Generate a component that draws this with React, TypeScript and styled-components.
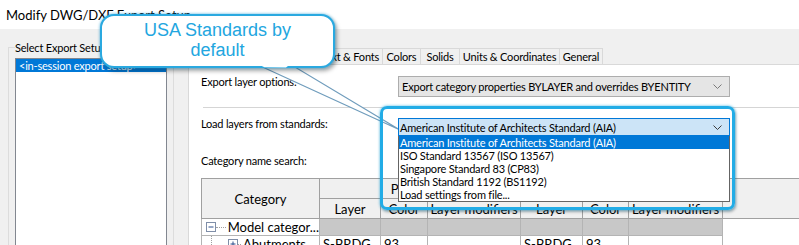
import styled, { createGlobalStyle } from "styled-components";

const GlobalStyle = createGlobalStyle`
  html, body {
    margin: 0;
    padding: 0;
    background: #ffffff;
  }
  * {
    box-sizing: border-box;
  }
`;

const UI_FONT = `"Lato", "Liberation Sans", sans-serif`;

const Window = styled.div`
  position: relative;
  width: 799px;
  height: 245px;
  overflow: hidden;
  background: #f0f0f0;
  font-family: ${UI_FONT};
  font-size: 11px;
  letter-spacing: -0.2px;
  color: #000;
`;

const TitleBar = styled.div`
  height: 29px;
  background: #ffffff;
  padding-left: 6px;
  display: flex;
  align-items: center;
  font-size: 13px;
  letter-spacing: 0;
`;

const Body = styled.div`
  display: flex;
  height: 216px;
`;

const LeftPane = styled.div`
  width: 188px;
  flex-shrink: 0;
  padding: 12px 14px 0 8px;
`;

const GroupBox = styled.fieldset`
  margin: 0;
  padding: 0 6px;
  border: 1px solid #dcdcdc;
  height: 240px;
  min-width: 0;
`;

const Legend = styled.legend`
  padding: 0;
  font-size: 11px;
  line-height: 13px;
`;

const ListBox = styled.div`
  margin-top: 4px;
  height: 200px;
  background: #ffffff;
  border: 1px solid #828790;
`;

const ListItem = styled.div<{ $selected?: boolean }>`
  height: 13px;
  line-height: 13px;
  padding-left: 3px;
  white-space: nowrap;
  overflow: hidden;
  background: ${({ $selected }) => ($selected ? "#0078d7" : "transparent")};
  color: ${({ $selected }) => ($selected ? "#ffffff" : "#000000")};
`;

const RightPane = styled.div`
  flex: 1;
  padding-top: 19px;
  display: flex;
  flex-direction: column;
  min-width: 0;
`;

const TabStrip = styled.div`
  display: flex;
  align-items: flex-end;
  height: 16px;
  white-space: nowrap;
`;

const Tab = styled.div<{ $w: number; $active?: boolean }>`
  width: ${({ $w }) => $w}px;
  height: ${({ $active }) => ($active ? 18 : 16)}px;
  margin-bottom: ${({ $active }) => ($active ? -1 : 0)}px;
  border: 1px solid #d9d9d9;
  border-bottom: none;
  border-left-width: ${({ $active }) => ($active ? 1 : 0)}px;
  background: ${({ $active }) => ($active ? "#ffffff" : "#f0f0f0")};
  display: flex;
  align-items: center;
  justify-content: center;
  font-size: 11px;
  flex-shrink: 0;
  position: relative;
`;

const TabPanel = styled.div`
  flex: 1;
  background: #ffffff;
  border: 1px solid #d9d9d9;
  border-right: none;
  padding-left: 12px;
  display: flex;
  flex-direction: column;
`;

const FormRow = styled.div<{ $h: number }>`
  display: flex;
  height: ${({ $h }) => $h}px;
  flex-shrink: 0;
`;

const FieldLabel = styled.div<{ $top: number }>`
  width: 197px;
  flex-shrink: 0;
  padding-top: ${({ $top }) => $top}px;
  line-height: 16px;
  white-space: nowrap;
`;

const ComboWrap = styled.div<{ $top: number }>`
  position: relative;
  z-index: 2;
  margin-top: ${({ $top }) => $top}px;
  width: 332px;
`;

const Combo = styled.div<{ $h: number; $open?: boolean }>`
  height: ${({ $h }) => $h}px;
  border: 1px solid ${({ $open }) => ($open ? "#0078d7" : "#adadad")};
  background: ${({ $open }) => ($open ? "#cce4f7" : "#e5e5e5")};
  display: flex;
  align-items: center;
  justify-content: space-between;
  padding: 0 7px 0 ${({ $open }) => ($open ? 1 : 3)}px;
  white-space: nowrap;
`;

const DropList = styled.div`
  position: absolute;
  top: 100%;
  left: 0;
  width: 100%;
  background: #ffffff;
  border: 1px solid #646464;
  border-top: none;
  z-index: 3;
`;

const DropItem = styled.div<{ $selected?: boolean }>`
  height: 13px;
  line-height: 13px;
  padding-left: 1px;
  white-space: nowrap;
  background: ${({ $selected }) => ($selected ? "#0078d7" : "#ffffff")};
  color: ${({ $selected }) => ($selected ? "#ffffff" : "#000000")};
`;

const SearchBox = styled.div`
  margin-top: 16px;
  width: 332px;
  height: 20px;
  border: 1px solid #7a7a7a;
`;

const Separator = styled.div`
  margin: 10px 0 0 2px;
  height: 1px;
  background: #d5d5d5;
  flex-shrink: 0;
`;

const Grid = styled.table`
  border-collapse: collapse;
  table-layout: fixed;
  width: 640px;
  font-size: 13px;
  letter-spacing: 0;
  border-top: 1px solid #a0a0a0;
`;

const HeadCell = styled.th<{ $h?: number }>`
  height: ${({ $h }) => $h ?? 20}px;
  padding: 0;
  font-weight: normal;
  background: #f0f0f0;
  border: 1px solid #a0a0a0;
  text-align: center;
  white-space: nowrap;
  overflow: hidden;
`;

const Filler = styled.th`
  background: #f0f0f0;
  border-bottom: 1px solid #a0a0a0;
  padding: 0;
`;

const Cell = styled.td<{ $hatched?: boolean }>`
  height: 17px;
  padding: 0 0 0 3px;
  border: 1px solid #b4b4b4;
  white-space: nowrap;
  overflow: hidden;
  background-color: ${({ $hatched }) => ($hatched ? "#c8c8c8" : "#ffffff")};
  background-image: ${({ $hatched }) =>
    $hatched
      ? "repeating-conic-gradient(#b9b9b9 0% 25%, #d7d7d7 0% 50%)"
      : "none"};
  background-size: 2px 2px;
`;

const BlankCell = styled.td`
  padding: 0;
  background: #ffffff;
`;

const TreeCell = styled.div`
  display: flex;
  align-items: center;
  height: 16px;
`;

const TreeLine = styled.span<{ $w: number }>`
  width: ${({ $w }) => $w}px;
  border-top: 1px dotted #a0a0a0;
  margin: 0 2px 0 0;
`;

const VLine = styled.span`
  width: 0;
  height: 17px;
  border-left: 1px dotted #a0a0a0;
  margin-left: 4px;
  margin-right: 16px;
`;

const Bubble = styled.div`
  position: absolute;
  left: 100px;
  top: 14px;
  width: 235px;
  height: 54px;
  background: #ffffff;
  border: 2px solid #2aa9e0;
  border-radius: 14px;
  box-shadow: 0 0 3px rgba(42, 169, 224, 0.8), 2px 3px 4px rgba(0, 0, 0, 0.35);
  font-family: "Liberation Sans", Arial, sans-serif;
  font-size: 18px;
  line-height: 20px;
  letter-spacing: 0;
  color: #22a6e0;
  text-align: center;
  padding-top: 4px;
  z-index: 6;
`;

const Tail = styled.svg`
  position: absolute;
  left: 250px;
  top: 60px;
  z-index: 1;
  overflow: visible;
`;

const TailCover = styled.svg`
  position: absolute;
  left: 250px;
  top: 60px;
  z-index: 7;
  overflow: visible;
`;

const Highlight = styled.div`
  position: absolute;
  left: 380px;
  top: 106px;
  width: 355px;
  height: 104px;
  border: 3px solid #22ace6;
  border-radius: 7px;
  box-shadow: 0 0 3px rgba(34, 172, 230, 0.8), 1px 2px 3px rgba(0, 0, 0, 0.3);
  z-index: 5;
  pointer-events: none;
`;

function Chevron({ color }: { color: string }) {
  return (
    <svg width="9" height="5" viewBox="0 0 9 5">
      <polyline points="0.5,0.5 4.5,4.5 8.5,0.5" fill="none" stroke={color} strokeWidth="1" />
    </svg>
  );
}

function Expander({ open }: { open: boolean }) {
  return (
    <svg width="10" height="10" viewBox="0 0 10 10" style={{ flexShrink: 0 }}>
      <rect x="0.5" y="0.5" width="9" height="9" fill="#ffffff" stroke="#7f8ea8" />
      <line x1="2.5" y1="5" x2="7.5" y2="5" stroke="#2c4f8c" />
      {!open && <line x1="5" y1="2.5" x2="5" y2="7.5" stroke="#2c4f8c" />}
    </svg>
  );
}

const tabs = [
  { label: "Layers", w: 44, active: true },
  { label: "Lines", w: 36 },
  { label: "Patterns", w: 50 },
  { label: "Text & Fonts", w: 65 },
  { label: "Colors", w: 38 },
  { label: "Solids", w: 39 },
  { label: "Units & Coordinates", w: 100 },
  { label: "General", w: 43 },
];

const standards = [
  "American Institute of Architects Standard (AIA)",
  "ISO Standard 13567 (ISO 13567)",
  "Singapore Standard 83 (CP83)",
  "British Standard 1192 (BS1192)",
  "Load settings from file...",
];

export default function App() {
  return (
    <>
      <GlobalStyle />
      <Window>
        <TitleBar>Modify DWG/DXF Export Setup</TitleBar>
        <Body>
          <LeftPane>
            <GroupBox>
              <Legend>Select Export Setup</Legend>
              <ListBox>
                <ListItem $selected>&lt;in-session export setup&gt;</ListItem>
              </ListBox>
            </GroupBox>
          </LeftPane>
          <RightPane>
            <TabStrip>
              {tabs.map((t) => (
                <Tab key={t.label} $w={t.w} $active={t.active}>
                  {t.label}
                </Tab>
              ))}
            </TabStrip>
            <TabPanel>
              <FormRow $h={32}>
                <FieldLabel $top={9}>Export layer options:</FieldLabel>
                <ComboWrap $top={11}>
                  <Combo $h={21}>
                    <span>Export category properties BYLAYER and overrides BYENTITY</span>
                    <Chevron color="#7a7a7a" />
                  </Combo>
                </ComboWrap>
              </FormRow>
              <Separator />
              <FormRow $h={28}>
                <FieldLabel $top={8}>Load layers from standards:</FieldLabel>
                <ComboWrap $top={10}>
                  <Combo $h={18} $open>
                    <span>{standards[0]}</span>
                    <Chevron color="#3c3c3c" />
                  </Combo>
                  <DropList>
                    {standards.map((s, i) => (
                      <DropItem key={s} $selected={i === 0}>
                        {s}
                      </DropItem>
                    ))}
                  </DropList>
                </ComboWrap>
              </FormRow>
              <FormRow $h={42}>
                <FieldLabel $top={17}>Category name search:</FieldLabel>
                <SearchBox />
              </FormRow>
              <Grid>
                <colgroup>
                  <col style={{ width: 118 }} />
                  <col style={{ width: 61 }} />
                  <col style={{ width: 47 }} />
                  <col style={{ width: 93 }} />
                  <col style={{ width: 62 }} />
                  <col style={{ width: 46 }} />
                  <col style={{ width: 94 }} />
                  <col style={{ width: 119 }} />
                </colgroup>
                <thead>
                  <tr>
                    <HeadCell rowSpan={2} $h={40}>Category</HeadCell>
                    <HeadCell colSpan={3}>Projection</HeadCell>
                    <HeadCell colSpan={3}>Cut</HeadCell>
                    <Filler rowSpan={2} />
                  </tr>
                  <tr>
                    <HeadCell>Layer</HeadCell>
                    <HeadCell>Color</HeadCell>
                    <HeadCell>Layer modifiers</HeadCell>
                    <HeadCell>Layer</HeadCell>
                    <HeadCell>Color</HeadCell>
                    <HeadCell>Layer modifiers</HeadCell>
                  </tr>
                </thead>
                <tbody>
                  <tr>
                    <Cell style={{ paddingLeft: 4 }}>
                      <TreeCell>
                        <Expander open />
                        <TreeLine $w={11} />
                        Model categor...
                      </TreeCell>
                    </Cell>
                    <Cell $hatched />
                    <Cell $hatched />
                    <Cell $hatched />
                    <Cell $hatched />
                    <Cell $hatched />
                    <Cell $hatched />
                    <BlankCell />
                  </tr>
                  <tr>
                    <Cell style={{ paddingLeft: 5 }}>
                      <TreeCell>
                        <VLine />
                        <Expander open={false} />
                        <TreeLine $w={3} />
                        Abutments
                      </TreeCell>
                    </Cell>
                    <Cell>S-BRDG</Cell>
                    <Cell>93</Cell>
                    <Cell />
                    <Cell>S-BRDG</Cell>
                    <Cell>93</Cell>
                    <Cell />
                    <BlankCell />
                  </tr>
                </tbody>
              </Grid>
            </TabPanel>
          </RightPane>
        </Body>

        <Tail width="160" height="80">
          <polygon points="6,4 150,70 40,4" fill="#ffffff" stroke="#6f9cbc" strokeWidth="1.2" />
        </Tail>
        <TailCover width="50" height="12">
          <polygon points="7.5,4 14.5,7.3 36,7.6 40.5,4" fill="#ffffff" />
        </TailCover>
        <Highlight />
        <Bubble>
          USA Standards by
          <br />
          default
        </Bubble>
      </Window>
    </>
  );
}
